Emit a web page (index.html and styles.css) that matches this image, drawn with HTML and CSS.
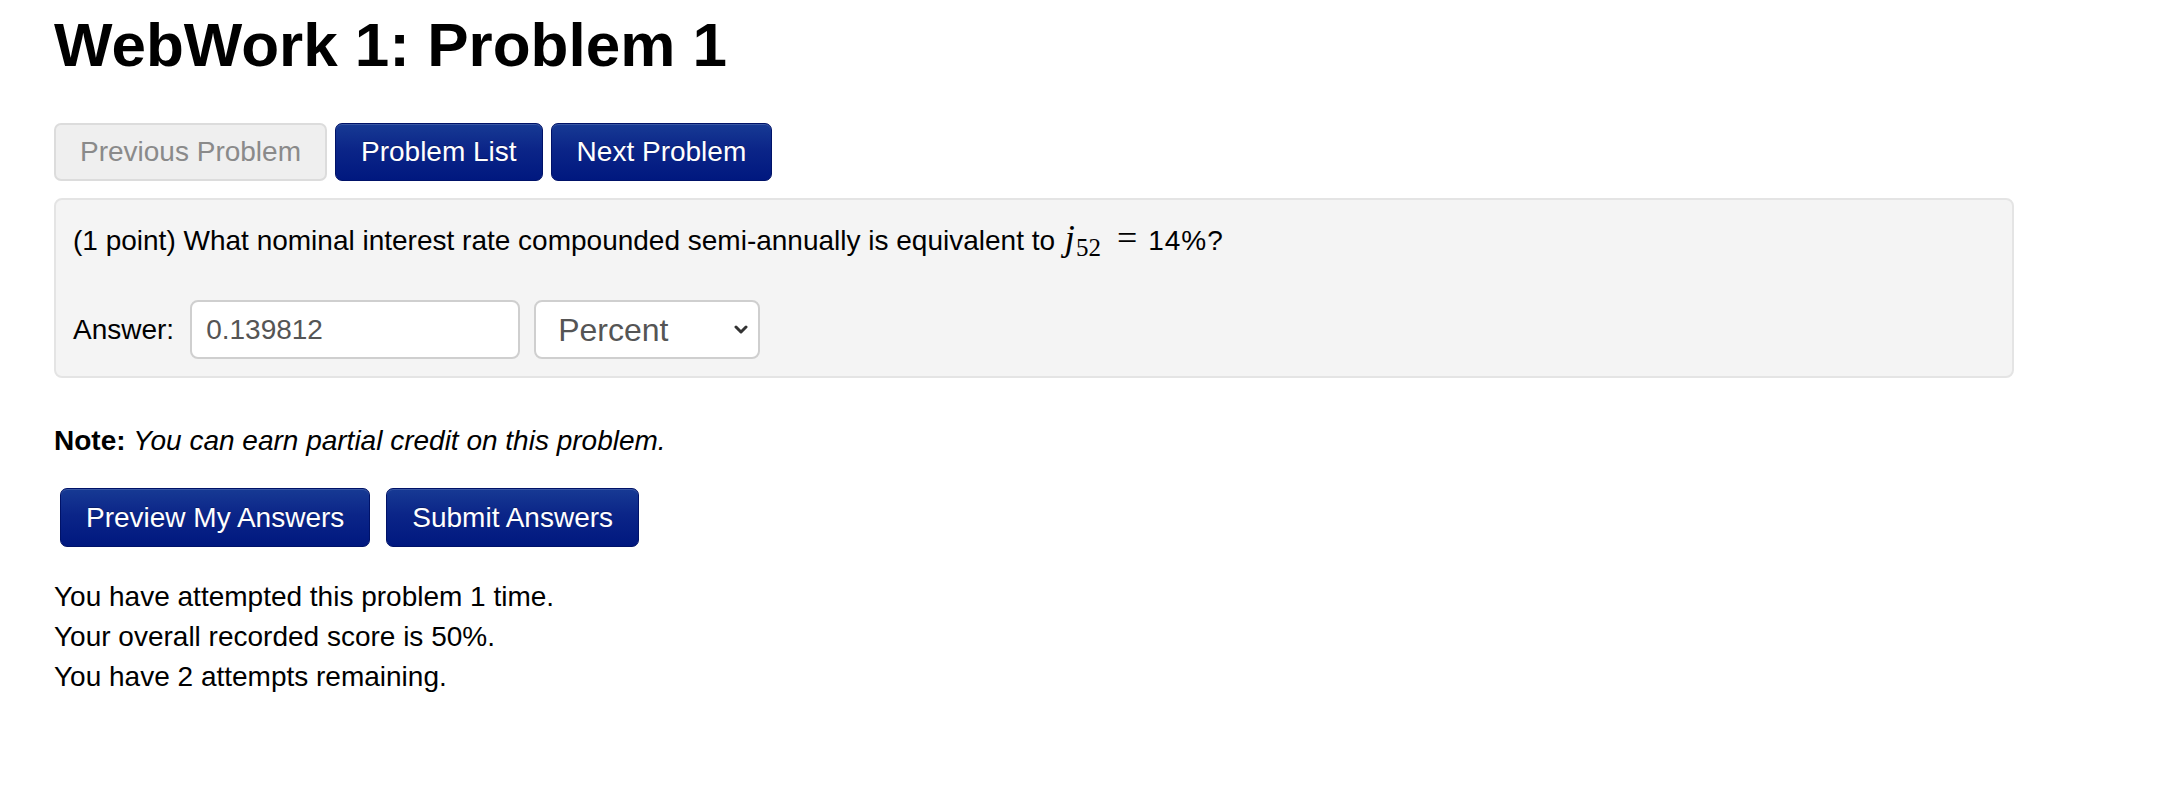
FILE: index.html
```html
<!DOCTYPE html>
<html lang="en">
<head>
    <meta charset="UTF-8">
    <meta name="viewport" content="width=device-width, initial-scale=1.0">
    <title>WebWork 1: Problem 1</title>
    <link rel="stylesheet" href="styles.css">
</head>
<body>
    <h1>WebWork 1: Problem 1</h1>

    <div class="problem-nav">
        <span class="btn disabled">Previous Problem</span>
        <a class="btn primary" href="#">Problem List</a>
        <a class="btn primary" href="#">Next Problem</a>
    </div>

    <div class="problem-box">
        <p class="problem-text">
            (1 point) What nominal interest rate compounded semi-annually is equivalent to
            <span class="math"><span class="mi">j</span><span class="msub">52</span><span class="mo">=</span></span><span class="mn">14%</span>?
        </p>
        <div class="answer-row">
            <label for="answer">Answer:</label>
            <input id="answer" class="answer-input" type="text" value="0.139812">
            <div class="select-wrap">
                <select class="unit-select">
                    <option>Percent</option>
                    <option>Decimal</option>
                </select>
                <svg class="chevron" width="14" height="10" viewBox="0 0 14 10">
                    <path d="M2 2 L7 7 L12 2" fill="none" stroke="#333" stroke-width="3" stroke-linecap="round" stroke-linejoin="round"/>
                </svg>
            </div>
        </div>
    </div>

    <p class="note"><strong>Note:</strong> <em>You can earn partial credit on this problem.</em></p>

    <div class="submit-row">
        <button class="btn primary" type="button">Preview My Answers</button>
        <button class="btn primary" type="button">Submit Answers</button>
    </div>

    <div class="attempts">
        <div>You have attempted this problem 1 time.</div>
        <div>Your overall recorded score is 50%.</div>
        <div>You have 2 attempts remaining.</div>
    </div>
</body>
</html>
```

FILE: styles.css
```css
body {
    margin: 0;
    padding: 11px 54px;
    font-family: "Liberation Sans", Arial, sans-serif;
    font-size: 28px;
    line-height: 40px;
    color: #000;
    background: #fff;
}
h1 {
    margin: 0 0 44px;
    font-size: 62px;
    line-height: 68px;
    font-weight: bold;
}
.problem-nav {
    display: flex;
    gap: 8px;
}
.btn {
    display: inline-block;
    box-sizing: border-box;
    height: 58px;
    padding: 8px 25px;
    border: 1px solid #001268;
    border-radius: 7px;
    font-family: inherit;
    font-size: 28px;
    line-height: 40px;
    text-decoration: none;
    white-space: nowrap;
    cursor: pointer;
}
.btn.primary {
    color: #fff;
    background: linear-gradient(to bottom, #173a94 0%, #0b2588 45%, #00187f 100%);
    text-shadow: 0 -1px 0 rgba(0,0,0,0.25);
    box-shadow: inset 0 1px 0 rgba(255,255,255,0.15);
}
.btn.disabled {
    color: #8a8a8a;
    background: #efefef;
    border: 2px solid #dcdcdc;
    padding: 7px 24px;
    cursor: default;
}
.problem-box {
    box-sizing: border-box;
    width: 1960px;
    margin-top: 17px;
    padding: 18px 17px 17px;
    background: #f4f4f4;
    border: 2px solid #e4e4e4;
    border-radius: 8px;
}
.problem-text {
    margin: 0;
}
.math {
    font-family: "Liberation Serif", "Times New Roman", serif;
}
.mi {
    font-style: italic;
    font-size: 36px;
    margin-left: 2px;
}
.msub {
    font-size: 25px;
    vertical-align: -6px;
    margin-left: 1px;
}
.mo {
    font-size: 36px;
    margin: 0 11px 0 16px;
}
.mn {
    letter-spacing: 1px;
}
.answer-row {
    display: flex;
    align-items: center;
    margin-top: 32px;
}
.answer-row label {
    margin-right: 16px;
}
.answer-input {
    box-sizing: border-box;
    width: 330px;
    height: 59px;
    padding: 0 14px;
    border: 2px solid #cfcfcf;
    border-radius: 8px;
    background: #fff;
    font-family: inherit;
    font-size: 28px;
    color: #555;
}
.select-wrap {
    position: relative;
    margin-left: 14px;
}
.unit-select {
    box-sizing: border-box;
    width: 226px;
    height: 59px;
    padding: 0 22px;
    border: 2px solid #cfcfcf;
    border-radius: 8px;
    background: #fff;
    font-family: inherit;
    font-size: 32px;
    color: #555;
    appearance: none;
    -webkit-appearance: none;
}
.chevron {
    position: absolute;
    right: 12px;
    top: 25px;
    pointer-events: none;
}
.note {
    margin: 43px 0 0;
}
.submit-row {
    display: flex;
    gap: 16px;
    margin: 27px 0 0 6px;
}
.submit-row .btn {
    height: 59px;
}
.attempts {
    margin-top: 30px;
}
```
